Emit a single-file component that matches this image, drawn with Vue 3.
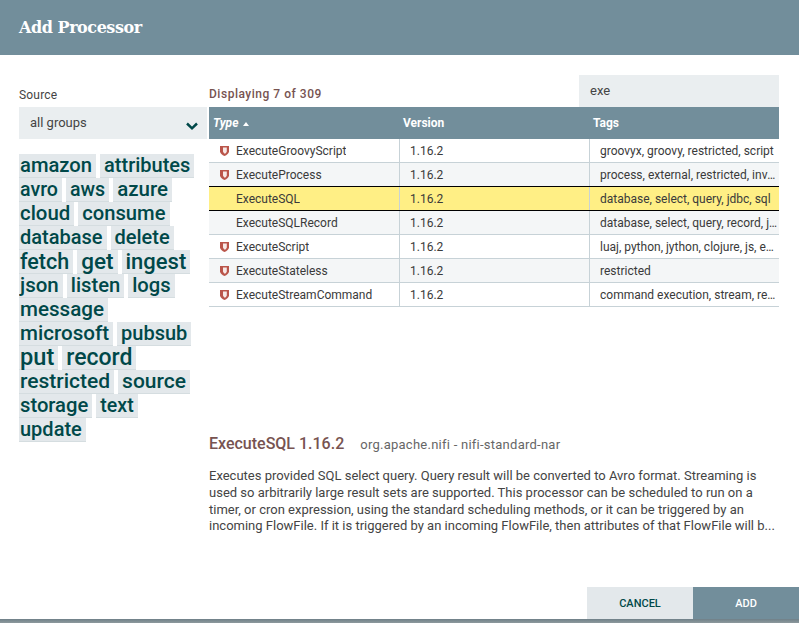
<script setup>
const tags = [
  ['amazon', 20.2], ['attributes', 20], ['avro', 19.6], ['aws', 19.6], ['azure', 20.5],
  ['cloud', 20.4], ['consume', 20.2], ['database', 20], ['delete', 20],
  ['fetch', 21.5], ['get', 22.5], ['ingest', 22], ['json', 20.5], ['listen', 20.2], ['logs', 20.2],
  ['message', 20.6], ['microsoft', 20.6], ['pubsub', 20], ['put', 23.6], ['record', 23],
  ['restricted', 21], ['source', 21], ['storage', 20.2], ['text', 19.6], ['update', 20]
]
const rows = [
  { type: 'ExecuteGroovyScript', tags: 'groovyx, groovy, restricted, script', restricted: true },
  { type: 'ExecuteProcess', tags: 'process, external, restricted, invoke, command, arguments', restricted: true },
  { type: 'ExecuteSQL', tags: 'database, select, query, jdbc, sql', selected: true },
  { type: 'ExecuteSQLRecord', tags: 'database, select, query, record, jdbc, sql' },
  { type: 'ExecuteScript', tags: 'luaj, python, jython, clojure, js, execute, groovy', restricted: true },
  { type: 'ExecuteStateless', tags: 'restricted', restricted: true },
  { type: 'ExecuteStreamCommand', tags: 'command execution, stream, restricted, external', restricted: true }
]
</script>

<template>
  <div class="dialog">
    <header class="head">Add Processor</header>
    <main class="body">
      <aside class="side">
        <div class="source-label">Source</div>
        <div class="select">
          <span>all groups</span>
          <svg class="chev" width="12" height="9" viewBox="0 0 12 9"><path d="M1 1.5 L6 6.3 L11 1.5" fill="none" stroke="#004849" stroke-width="2.5"/></svg>
        </div>
        <div class="cloud">
          <div class="cloud-inner">
            <span v-for="t in tags" :key="t[0]" class="tag" :style="{ fontSize: t[1] + 'px' }">{{ t[0] }}</span>
          </div>
        </div>
      </aside>
      <section class="content">
        <div class="top">
          <div class="count">Displaying 7 of 309</div>
          <div class="search">exe</div>
        </div>
        <div class="grid">
          <div class="hrow">
            <div class="hc c1"><i>Type</i><span class="sort"></span></div>
            <div class="hc c2">Version</div>
            <div class="hc c3">Tags</div>
          </div>
          <div v-for="(r, i) in rows" :key="r.type" class="row" :class="{ odd: i % 2 === 1, sel: r.selected }">
            <div class="cell cc1 type">
              <span class="ico">
                <svg v-if="r.restricted" width="9" height="10" viewBox="0 0 9 10"><path d="M0 0H9V5.2C9 7.4 6.8 9 4.5 10C2.2 9 0 7.4 0 5.2Z" fill="#ba554a"/><path d="M3 1.5H6.8V5.2C6.8 6.2 6 7 4.9 7.7C3.8 7 3 6.2 3 5.2Z" fill="#f7e9e7"/></svg>
              </span>
              <span class="txt">{{ r.type }}</span>
            </div>
            <div class="cell cc2 v">1.16.2</div>
            <div class="cell cc3 t"><span class="txt">{{ r.tags }}</span></div>
          </div>
        </div>
        <div class="desc">
          <div class="dtitle"><span class="dname">ExecuteSQL 1.16.2</span><span class="dbundle">org.apache.nifi - nifi-standard-nar</span></div>
          <p class="dtext">Executes provided SQL select query. Query result will be converted to Avro format. Streaming is used so arbitrarily large result sets are supported. This processor can be scheduled to run on a timer, or cron expression, using the standard scheduling methods, or it can be triggered by an incoming FlowFile. If it is triggered by an incoming FlowFile, then attributes of that FlowFile will b...</p>
        </div>
      </section>
    </main>
    <footer class="foot">
      <button class="btn cancel">CANCEL</button>
      <button class="btn add">ADD</button>
    </footer>
    <div class="strip"></div>
  </div>
</template>

<style>
html, body { margin: 0; background: #fff; }
</style>

<style scoped>
.dialog {
  width: 799px; height: 623px; overflow: hidden; display: flex; flex-direction: column;
  font-family: Roboto, "Liberation Sans", sans-serif; background: #fff;
}
.head {
  height: 55px; flex: none; background: #728e9b; color: #fff; padding-left: 19px;
  font-family: "DejaVu Serif", serif; font-weight: 700; font-size: 16px; letter-spacing: -.45px; line-height: 55px;
}
.body { flex: 1; display: flex; min-height: 0; }
.side { width: 188px; margin-left: 19px; margin-right: 2px; flex: none; padding-top: 32px; }
.source-label { font-size: 12px; letter-spacing: .2px; line-height: 16px; color: #444; height: 20px; }
.select {
  height: 32px; background: #eaeef0; display: flex; justify-content: space-between;
  font-size: 13px; color: #444; padding: 0 9px 0 11px; line-height: 32px;
}
.chev { margin-top: 15px; }
.cloud { margin-top: 15px; overflow: hidden; width: 188px; }
.cloud-inner { margin-left: -3px; font-size: 0; width: 192px; }
.tag {
  display: inline-block; height: 23px; line-height: 23px; padding: 0 4px; margin: 0 4px 1px 0;
  background: #e3e8eb; color: #004849; font-weight: 500; vertical-align: top;
  box-shadow: 0 1px 0 #d5dde0;
}
.content { flex: 1; min-width: 0; margin-right: 20px; }
.top { height: 52px; display: flex; justify-content: space-between; padding-top: 20px; box-sizing: border-box; }
.count { font-size: 12px; letter-spacing: .52px; font-weight: 500; color: #775351; margin-top: 12px; line-height: 14px; }
.search { width: 189px; height: 32px; background: #eaeef0; padding-left: 11px; font-size: 13px; line-height: 32px; color: #444; }
.hrow { height: 32px; background: #728e9b; display: flex; color: #fff; font-size: 12px; font-weight: 700; line-height: 32px; }
.c1, .c2 { width: 190px; flex: none; box-sizing: border-box; }
.c3 { flex: 1; min-width: 0; box-sizing: border-box; }
.hc { padding-left: 4px; }
.sort { display: inline-block; width: 0; height: 0; border: 3px solid transparent; border-bottom: 4px solid #fff; border-top: 0; margin-left: 5px; vertical-align: 1px; }
.row { height: 24px; display: flex; box-sizing: border-box; border-bottom: 1px solid #c7d2d7; font-size: 12px; color: #3a3a3a; line-height: 25px; background: #fff; }
.row.odd { background: #f4f6f7; }
.row.sel { background: #ffef85; border-bottom-color: #000; box-shadow: 0 -1px 0 #000; position: relative; }
.cell { border-right: 1px solid #c7d2d7; overflow: hidden; white-space: nowrap; box-sizing: border-box; }
.cc1 { width: 191px; flex: none; }
.cc2 { width: 190px; flex: none; }
.cc3 { flex: 1; min-width: 0; border-right: 0; }
.type { display: flex; align-items: flex-start; padding-left: 11px; }
.ico { width: 16px; height: 23px; flex: none; display: flex; align-items: center; }
.txt { overflow: hidden; text-overflow: ellipsis; display: block; }
.v { padding-left: 10px; }
.t { padding: 0 1px 0 10px; }
.desc { margin-top: 127px; }
.dtitle { display: flex; align-items: baseline; }
.dname { font-size: 16px; font-weight: 500; color: #775351; }
.dbundle { font-size: 13px; letter-spacing: .25px; color: #666; margin-left: 16px; }
.dtext { margin: 15px 0 0; font-size: 13px; line-height: 16.8px; color: #444; width: 566px; }
.foot { height: 32px; flex: none; display: flex; justify-content: flex-end; }
.btn { width: 106px; height: 32px; border: 0; font: 500 11px Roboto, sans-serif; padding: 0; }
.cancel { background: #e3e8eb; color: #004849; }
.add { background: #728e9b; color: #fff; }
.strip { height: 4px; flex: none; background: linear-gradient(#6f8088, #8d999d); }
</style>
